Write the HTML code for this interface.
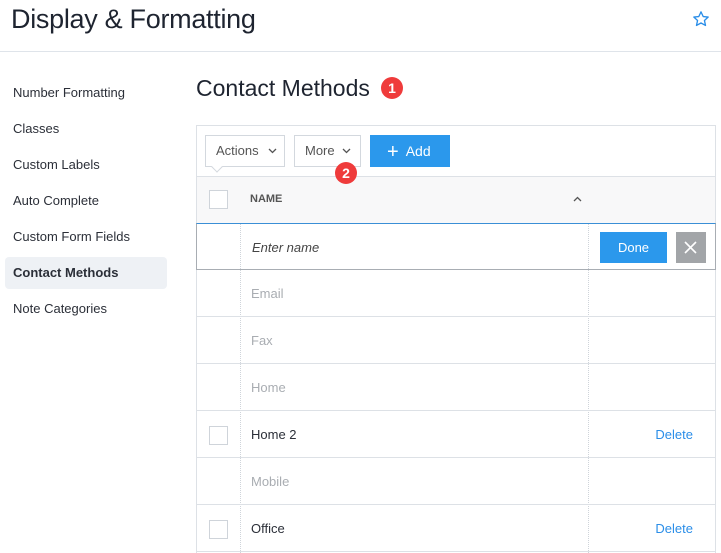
<!DOCTYPE html>
<html><head><style>
*{box-sizing:border-box;margin:0;padding:0}
body{width:721px;height:553px;overflow:hidden;background:#fff;font-family:"Liberation Sans",sans-serif;color:#2b2f38;position:relative}
.a{position:absolute}
h1{position:absolute;left:11px;top:4px;font-size:27px;font-weight:normal;color:#1e2430;letter-spacing:-0.3px}
.side{position:absolute;left:13px;font-size:13px;color:#2b2f38}
.badge{position:absolute;width:22px;height:22px;border-radius:50%;background:#ef3b3b;color:#fff;font-size:14px;font-weight:bold;text-align:center;line-height:22px;z-index:5}
.btn{position:absolute;top:135px;height:32px;border:1px solid #d3d8de;background:#fff;font-size:13px;color:#555;line-height:30px;padding-left:10px}
.btn svg{position:absolute;top:12px}
.row{position:absolute;left:196px;width:520px;height:47px;border-bottom:1px solid #dde1e6;font-size:13px}
.row .t{position:absolute;left:55px;top:16px}
.cb{position:absolute;width:19px;height:19px;border:1px solid #cfd4da;background:#fff}
.del{position:absolute;right:23px;top:16px;color:#2b8ee8}
</style></head><body>
<h1>Display &amp; Formatting</h1>
<svg class="a" style="left:692px;top:10px" width="18" height="18" viewBox="0 0 24 24"><path d="M12 2.5l2.9 6.2 6.7.7-5 4.6 1.4 6.6L12 17.3l-6 3.3 1.4-6.6-5-4.6 6.7-.7z" fill="none" stroke="#2b8ee8" stroke-width="1.8" stroke-linejoin="round"/></svg>
<div class="a" style="left:0;top:51px;width:721px;height:1px;background:#dfe4ea"></div>
<div class="side" style="top:85px">Number Formatting</div>
<div class="side" style="top:121px">Classes</div>
<div class="side" style="top:157px">Custom Labels</div>
<div class="side" style="top:193px">Auto Complete</div>
<div class="side" style="top:229px">Custom Form Fields</div>
<div class="a" style="left:5px;top:257px;width:162px;height:32px;background:#eef1f5;border-radius:4px"></div>
<div class="side" style="top:265px;font-weight:bold">Contact Methods</div>
<div class="side" style="top:301px">Note Categories</div>
<div class="a" style="left:196px;top:75px;font-size:23px;color:#1e2430">Contact Methods</div>
<div class="badge" style="left:381px;top:77px">1</div>
<div class="a" style="left:196px;top:125px;width:520px;height:428px;border:1px solid #dde1e6;border-bottom:none"></div>
<div class="btn" style="left:205px;width:80px">Actions<svg style="left:62px" width="9" height="6" viewBox="0 0 9 6"><path d="M1 1l3.5 3.5L8 1" fill="none" stroke="#555" stroke-width="1.3"/></svg></div>
<div class="a" style="left:213px;top:163px;width:8px;height:8px;background:#fff;border-right:1px solid #d3d8de;border-bottom:1px solid #d3d8de;transform:rotate(45deg);z-index:3"></div>
<div class="btn" style="left:294px;width:67px">More<svg style="left:47px" width="9" height="6" viewBox="0 0 9 6"><path d="M1 1l3.5 3.5L8 1" fill="none" stroke="#555" stroke-width="1.3"/></svg></div>
<div class="a" style="left:370px;top:135px;width:80px;height:32px;background:#2b98ec;color:#fff;font-size:14px;line-height:32px;padding-left:17px"><span style="font-size:20px;font-weight:300;vertical-align:-2px">+</span>&nbsp; Add</div>
<div class="badge" style="left:335px;top:162px">2</div>
<div class="a" style="left:197px;top:176px;width:518px;height:47px;background:#f8f8f9;border-top:1px solid #dde1e6"></div>
<div class="cb" style="left:209px;top:190px"></div>
<div class="a" style="left:250px;top:193px;font-size:11px;font-weight:bold;color:#555">NAME</div>
<svg class="a" style="left:573px;top:196px" width="9" height="6" viewBox="0 0 9 6"><path d="M1 5l3.5-3.5L8 5" fill="none" stroke="#555" stroke-width="1.3"/></svg>
<div class="a" style="left:240px;top:223px;width:0;height:330px;border-left:1px dotted #cfd4da"></div>
<div class="a" style="left:588px;top:223px;width:0;height:330px;border-left:1px dotted #cfd4da"></div>
<div class="a" style="left:196px;top:223px;width:520px;height:47px;border:1px solid #a8adb3;border-top-color:#3a8fd6;background:transparent"></div>
<div class="a" style="left:252px;top:240px;font-size:13px;font-style:italic;color:#444">Enter name</div>
<div class="a" style="left:600px;top:232px;width:67px;height:31px;background:#2b98ec;color:#fff;font-size:13px;text-align:center;line-height:31px">Done</div>
<div class="a" style="left:676px;top:232px;width:30px;height:31px;background:#a2a5a8"><svg style="position:absolute;left:8px;top:9px" width="13" height="13" viewBox="0 0 13 13"><path d="M1 1l11 11M12 1L1 12" stroke="#fff" stroke-width="1.6"/></svg></div>
<div class="row" style="top:270px"><span class="t" style="color:#a9adb2">Email</span></div>
<div class="row" style="top:317px"><span class="t" style="color:#a9adb2">Fax</span></div>
<div class="row" style="top:364px"><span class="t" style="color:#a9adb2">Home</span></div>
<div class="row" style="top:411px"><div class="cb" style="left:13px;top:15px"></div><span class="t">Home 2</span><span class="del">Delete</span></div>
<div class="row" style="top:458px"><span class="t" style="color:#a9adb2">Mobile</span></div>
<div class="row" style="top:505px"><div class="cb" style="left:13px;top:15px"></div><span class="t">Office</span><span class="del">Delete</span></div>
</body></html>
